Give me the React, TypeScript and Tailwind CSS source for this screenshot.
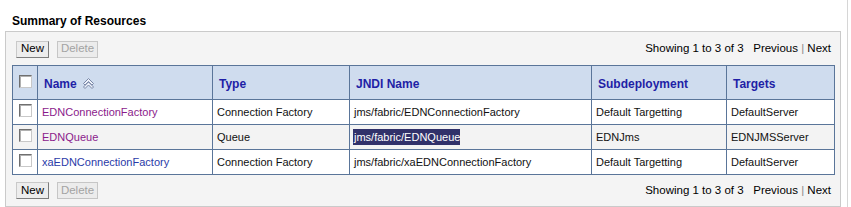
import React from "react";

const Check = () => (
  <span className="inline-block w-[13px] h-[13px] bg-white border border-t-[#6f6f6f] border-l-[#6f6f6f] border-r-[#c8c8c8] border-b-[#c8c8c8] shadow-[inset_1px_1px_0_#b0b0b0]" />
);

const Btn = ({ label, disabled, w }: { label: string; disabled?: boolean; w: string }) => (
  <span
    className={
      "inline-flex items-center justify-center h-[17px] text-[11.5px] leading-none border " +
      w +
      " " +
      (disabled
        ? "text-[#a3a3a3] bg-[#ececec] border-[#c6c6c6]"
        : "text-black bg-[#ededed] border-t-[#c9c9c9] border-l-[#c9c9c9] border-r-[#7d7d7d] border-b-[#7d7d7d]")
    }
  >
    {label}
  </span>
);

const SortIcon = () => (
  <svg width="13" height="12" viewBox="0 0 13 12" className="inline-block ml-[5px] -mt-[2px]">
    <polygon points="1.5,6.5 6.5,1.5 11.5,6.5 10,8 6.5,4.5 3,8" fill="#eef2fa" stroke="#7886a6" strokeWidth="1" />
    <polygon points="1.5,10 6.5,5 11.5,10 10,11.5 6.5,8 3,11.5" fill="#eef2fa" stroke="#7886a6" strokeWidth="1" />
  </svg>
);

const Pager = () => (
  <div className="text-[11.5px] text-black">
    Showing 1 to 3 of 3&nbsp;&nbsp; Previous <span className="text-[#8a8a8a]">|</span> Next
  </div>
);

const rows = [
  { name: "EDNConnectionFactory", visited: true, type: "Connection Factory", jndi: "jms/fabric/EDNConnectionFactory", sub: "Default Targetting", tgt: "DefaultServer", bg: "bg-white" },
  { name: "EDNQueue", visited: true, type: "Queue", jndi: "jms/fabric/EDNQueue", sub: "EDNJms", tgt: "EDNJMSServer", bg: "bg-[#f3f3f3]", sel: true },
  { name: "xaEDNConnectionFactory", visited: false, type: "Connection Factory", jndi: "jms/fabric/xaEDNConnectionFactory", sub: "Default Targetting", tgt: "DefaultServer", bg: "bg-white" },
];

export default function App() {
  const th = "border border-[#5a7599] text-left font-bold text-[12px] text-[#1f1fa6] pl-[6px] pt-[2px] align-middle";
  const td = "border border-[#5a7599] pl-[4px] align-middle text-[11px] text-[#111]";
  return (
    <div className="relative w-[851px] h-[207px] bg-white overflow-hidden" style={{ fontFamily: '"Liberation Sans", Arial, sans-serif' }}>
      <div className="absolute right-[3px] top-0 h-[207px] w-px bg-[#d6d6d6]" />
      <div className="pl-[12px] pt-[14px] h-[31px] text-[12px] font-bold text-black leading-[14px]">Summary of Resources</div>
      <div className="ml-[5px] w-[836px] h-[176px] bg-[#f4f4f4] border border-[#cacaca] px-[6px]">
        <div className="flex items-center justify-between h-[33px] pl-[4px] pr-[3px] pt-[1px]">
          <div className="flex gap-[8px]">
            <Btn label="New" w="w-[33px]" />
            <Btn label="Delete" disabled w="w-[41px]" />
          </div>
          <Pager />
        </div>
        <table className="border-collapse table-fixed w-[822px]">
          <colgroup>
            <col className="w-[25px]" />
            <col className="w-[175px]" />
            <col className="w-[137px]" />
            <col className="w-[242px]" />
            <col className="w-[135px]" />
            <col className="w-[108px]" />
          </colgroup>
          <thead>
            <tr className="h-[34px] bg-[#cfdcee]">
              <th className="border border-[#5a7599] text-center align-middle">
                <span className="inline-flex items-center justify-center pt-[2px]"><Check /></span>
              </th>
              <th className={th}>
                <span className="inline-flex items-center">Name<SortIcon /></span>
              </th>
              <th className={th}>Type</th>
              <th className={th}>JNDI Name</th>
              <th className={th}>Subdeployment</th>
              <th className={th}>Targets</th>
            </tr>
          </thead>
          <tbody>
            {rows.map((r) => (
              <tr key={r.name} className={"h-[24px] " + r.bg}>
                <td className="border border-[#5a7599] text-center align-middle">
                  <span className="inline-flex items-center justify-center pt-[1px]"><Check /></span>
                </td>
                <td className={td}>
                  <span className={r.visited ? "text-[#8b1a8b]" : "text-[#2a3aa8]"}>{r.name}</span>
                </td>
                <td className={td}>{r.type}</td>
                <td className={td}>
                  {r.sel ? <span className="bg-[#31316a] text-white py-[2px] -ml-[1px] pl-[1px]">{r.jndi}</span> : r.jndi}
                </td>
                <td className={td}>{r.sub}</td>
                <td className={td}>{r.tgt}</td>
              </tr>
            ))}
          </tbody>
        </table>
        <div className="flex items-center justify-between h-[31px] pl-[4px] pr-[3px] pt-[0px]">
          <div className="flex gap-[8px]">
            <Btn label="New" w="w-[33px]" />
            <Btn label="Delete" disabled w="w-[41px]" />
          </div>
          <Pager />
        </div>
      </div>
    </div>
  );
}
